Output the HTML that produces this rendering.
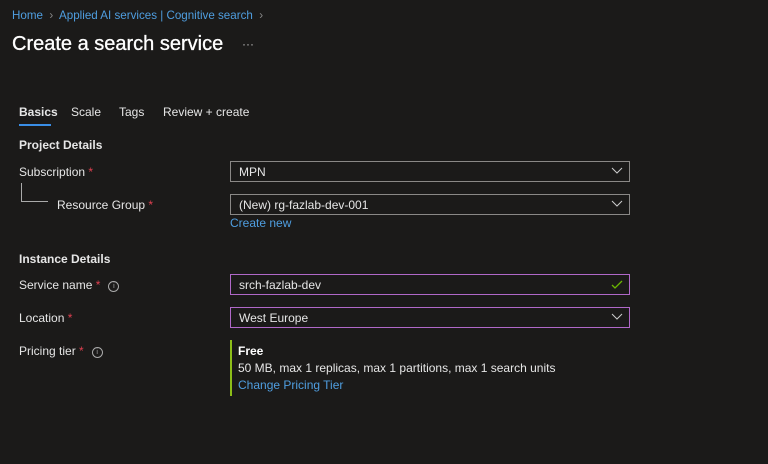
<!DOCTYPE html>
<html><head><style>
body{margin:0;width:768px;height:464px;background:#1b1a19;font-family:"Liberation Sans",sans-serif;color:#e6e6e6;font-size:12px;position:relative;overflow:hidden}
.a{position:absolute;white-space:nowrap}
.blue{color:#4f9ee0}
.req{color:#e04050}
.box{position:absolute;left:230px;width:398px;height:19px;border:1px solid #8a8886;box-sizing:content-box}
.box span{position:absolute;left:8px;top:3px}
.box svg{position:absolute;right:6px;top:5px}
.p{border-color:#b068c8}
.h{font-weight:bold;font-size:12px}
.info{display:inline-block;width:9px;height:9px;border:1px solid #aaa;border-radius:50%;font-size:7px;text-align:center;line-height:9px;color:#aaa;margin-left:8px;vertical-align:1px}
</style></head><body>
<div class="a blue" style="left:12px;top:9px;font-size:11.6px">Home <span style="color:#888">&nbsp;›&nbsp;</span> Applied AI services | Cognitive search <span style="color:#888">&nbsp;›</span></div>
<div class="a" style="left:12px;top:33px;font-size:20px;color:#fff;-webkit-text-stroke:0.3px #fff">Create a search service</div>
<div class="a" style="left:242px;top:37px;color:#bbb">···</div>
<div class="a" style="left:19px;top:105px;font-weight:bold">Basics</div>
<div class="a" style="left:19px;top:124px;width:32px;height:2px;background:#3a8ee6"></div>
<div class="a" style="left:71px;top:105px">Scale</div>
<div class="a" style="left:119px;top:105px">Tags</div>
<div class="a" style="left:163px;top:105px">Review + create</div>
<div class="a h" style="left:19px;top:138px">Project Details</div>
<div class="a" style="left:19px;top:165px">Subscription <span class="req">*</span></div>
<div class="a" style="left:21px;top:183px;width:1px;height:18px;background:#aaa"></div>
<div class="a" style="left:21px;top:201px;width:27px;height:1px;background:#aaa"></div>
<div class="a" style="left:57px;top:198px">Resource Group <span class="req">*</span></div>
<div class="box" style="top:161px"><span>MPN</span><svg width="12" height="8"><path d="M1 1l5 5 5-5" stroke="#ccc" fill="none"/></svg></div>
<div class="box" style="top:194px"><span>(New) rg-fazlab-dev-001</span><svg width="12" height="8"><path d="M1 1l5 5 5-5" stroke="#ccc" fill="none"/></svg></div>
<div class="a blue" style="left:230px;top:216px">Create new</div>
<div class="a h" style="left:19px;top:252px">Instance Details</div>
<div class="a" style="left:19px;top:278px">Service name <span class="req">*</span><span class="info">i</span></div>
<div class="a" style="left:19px;top:311px">Location <span class="req">*</span></div>
<div class="a" style="left:19px;top:344px">Pricing tier <span class="req">*</span><span class="info">i</span></div>
<div class="box p" style="top:274px"><span>srch-fazlab-dev</span><svg width="12" height="9"><path d="M1 5l3 3 7-7" stroke="#6bb700" fill="none" stroke-width="1.3"/></svg></div>
<div class="box p" style="top:307px"><span>West Europe</span><svg width="12" height="8"><path d="M1 1l5 5 5-5" stroke="#ccc" fill="none"/></svg></div>
<div class="a" style="left:230px;top:340px;width:2px;height:56px;background:#8cbd18"></div>
<div class="a" style="left:238px;top:344px;font-weight:bold;color:#fff">Free</div>
<div class="a" style="left:238px;top:361px">50 MB, max 1 replicas, max 1 partitions, max 1 search units</div>
<div class="a blue" style="left:238px;top:378px">Change Pricing Tier</div>
</body></html>
